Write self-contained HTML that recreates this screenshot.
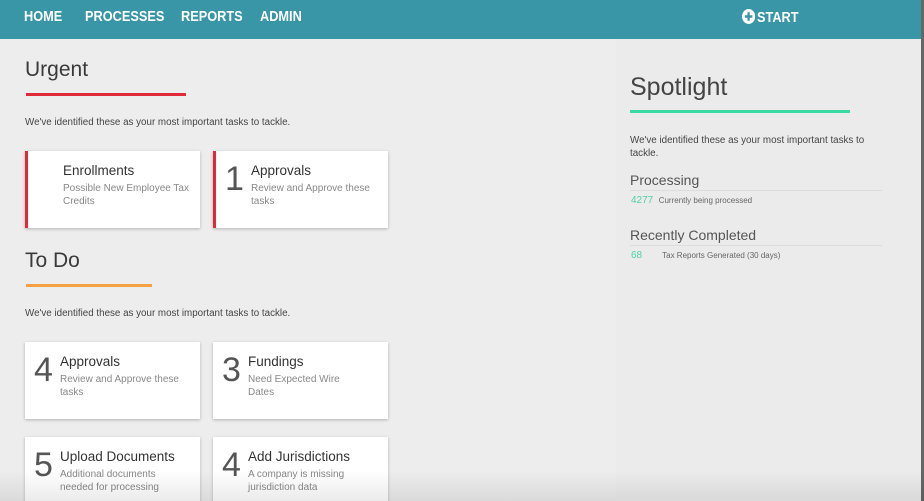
<!DOCTYPE html>
<html><head><style>
html,body{margin:0;width:924px;height:501px;overflow:hidden}
body{background:#ededed;font-family:"Liberation Sans",sans-serif;position:relative}
.nav{position:absolute;left:0;top:0;width:924px;height:39px;background:#3896a7}
.nav span{position:absolute;top:9px;color:#fff;font-weight:bold;font-size:14.5px;transform:scaleX(0.88);transform-origin:left;white-space:nowrap}
.right{position:absolute;left:616px;top:39px;width:305px;height:462px;background:#ebebeb}
.edge{position:absolute;left:921px;top:0;width:3px;height:501px;background:#666}
.h{position:absolute;color:#3a3a3a;font-size:21px}
.bar{position:absolute;height:3px}
.p{position:absolute;font-size:9.8px;color:#444;white-space:nowrap}
.card{position:absolute;width:175px;height:77px;background:#fff;box-shadow:0 1px 3px rgba(0,0,0,.25)}
.card.u{border-left:3px solid #e02a3a;width:172px}
.num{position:absolute;left:9px;top:9px;font-size:34px;color:#555}
.t{position:absolute;left:35px;top:12px;font-size:13.5px;color:#333;white-space:nowrap}
.s{position:absolute;left:35px;top:31px;font-size:10px;color:#888;line-height:13px;width:130px}
.sh{position:absolute;font-size:14px;color:#555;border-bottom:1px solid #ddd;width:252px;padding-bottom:2px}
.g{color:#4fd0a8}
.shade{position:absolute;left:0;top:470px;width:924px;height:31px;background:linear-gradient(rgba(0,0,0,0),rgba(0,0,0,.08))}
</style></head><body>
<div class="nav"><span style="left:24px">HOME</span><span style="left:85px">PROCESSES</span><span style="left:181px">REPORTS</span><span style="left:260px">ADMIN</span>
<span style="left:742px"><svg width="15" height="15" viewBox="0 0 14 14" style="vertical-align:-2px;margin-right:2px"><circle cx="7" cy="7" r="7" fill="#fff"/><path d="M7 3v8M3 7h8" stroke="#3896a7" stroke-width="2.4"/></svg>START</span></div>
<div class="right"></div><div class="edge"></div>
<div class="h" style="left:25px;top:58px">Urgent</div>
<div class="bar" style="left:26px;top:93px;width:160px;background:#e02a3a"></div>
<div class="p" style="left:25px;top:117px">We've identified these as your most important tasks to tackle.</div>
<div class="card u" style="left:25px;top:151px"><div class="t">Enrollments</div><div class="s">Possible New Employee Tax Credits</div></div>
<div class="card u" style="left:213px;top:151px"><div class="num">1</div><div class="t">Approvals</div><div class="s">Review and Approve these tasks</div></div>
<div class="h" style="left:25px;top:249px">To Do</div>
<div class="bar" style="left:26px;top:284px;width:126px;background:#f5a043"></div>
<div class="p" style="left:25px;top:308px">We've identified these as your most important tasks to tackle.</div>
<div class="card" style="left:25px;top:342px"><div class="num">4</div><div class="t">Approvals</div><div class="s">Review and Approve these tasks</div></div>
<div class="card" style="left:213px;top:342px"><div class="num">3</div><div class="t">Fundings</div><div class="s" style="width:100px">Need Expected Wire Dates</div></div>
<div class="card" style="left:25px;top:437px;height:70px"><div class="num">5</div><div class="t">Upload Documents</div><div class="s" style="width:110px">Additional documents needed for processing</div></div>
<div class="card" style="left:213px;top:437px;height:70px"><div class="num">4</div><div class="t">Add Jurisdictions</div><div class="s" style="width:110px">A company is missing jurisdiction data</div></div>
<div class="shade"></div>
<div class="h" style="left:630px;top:73px;font-size:25px;color:#444">Spotlight</div>
<div class="bar" style="left:630px;top:110px;width:220px;background:#3dd9a3"></div>
<div class="p" style="left:630px;top:134px;line-height:13px;width:245px;white-space:normal">We've identified these as your most important tasks to tackle.</div>
<div class="sh" style="left:630px;top:172px">Processing</div>
<div class="p" style="left:631px;top:195px"><span class="g" style="font-size:10px">4277</span>&nbsp; <span style="font-size:8px;color:#666">Currently being processed</span></div>
<div class="sh" style="left:630px;top:227px">Recently Completed</div>
<div class="p" style="left:631px;top:250px"><span class="g" style="font-size:10px">68</span><span style="font-size:8px;color:#666;margin-left:20px">Tax Reports Generated (30 days)</span></div>
</body></html>
